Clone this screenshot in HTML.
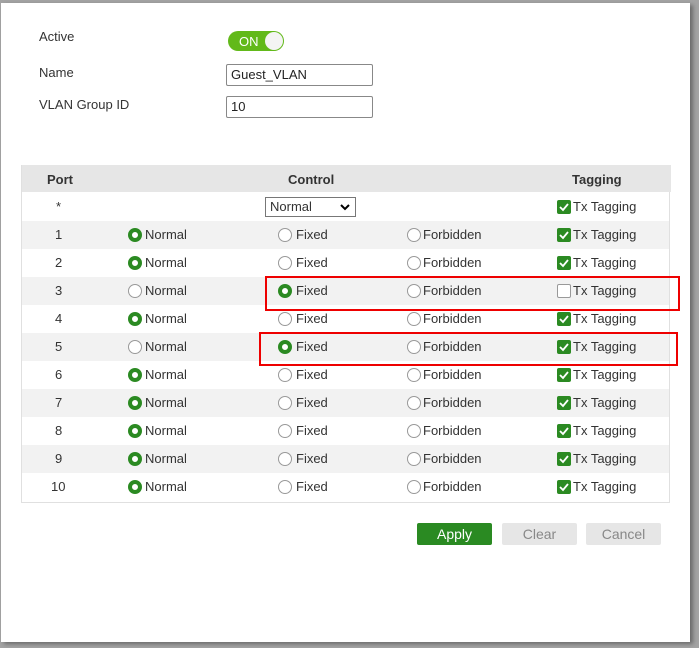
<!DOCTYPE html>
<html><head><style>
*{box-sizing:border-box;margin:0;padding:0}
body{width:699px;height:648px;background:#a3a3a3;position:relative;overflow:hidden;font-family:"Liberation Sans",sans-serif;font-size:13px;color:#333}
.dlg{position:absolute;left:1px;top:3px;width:689px;height:639px;background:#fff;box-shadow:3px 2px 4px rgba(0,0,0,.35)}
.a{position:absolute}
.lbl{font-size:13px;color:#333}
.inp{position:absolute;border:1px solid #888;border-radius:2px;height:22px;width:147px;padding-left:4px;line-height:20px;font-size:13px;color:#222}
.tbl{position:absolute;left:21px;top:165px;width:649px;height:338px;border:1px solid #e0e0e0;border-top:none}
.hdr{position:absolute;left:0;top:0;width:649px;height:27px;background:#e6e6e6;font-weight:bold;font-size:13px}
.row{position:absolute;left:0;width:647px;height:28px}
.row.alt{background:#f2f2f2}
.c{position:absolute;top:7px;line-height:14px}
.r{position:absolute;top:7px;width:14px;height:14px;border-radius:50%;border:1px solid #999;background:#fff}
.r.on{border:4px solid #2b8a22}
.cb{position:absolute;top:7px;width:14px;height:14px;border-radius:2px;background:#2b8a22}
.cb.off{background:#fff;border:1px solid #999}
.cb svg{position:absolute;left:2px;top:2px}
.btn{position:absolute;top:523px;height:22px;width:75px;text-align:center;line-height:22px;font-size:14px;border-radius:2px}
.red{position:absolute;border:2px solid #e00}
</style></head><body>
<div class="dlg"></div>
<div class="a lbl" style="left:39px;top:29px">Active</div>
<div class="a" style="left:228px;top:31px;width:56px;height:20px;border-radius:10px;background:#62b91a"><span class="a" style="left:11px;top:3px;color:#fff;font-size:13px">ON</span><span class="a" style="left:37px;top:1px;width:18px;height:18px;border-radius:50%;background:#f4f4f4"></span></div>
<div class="a lbl" style="left:39px;top:65px">Name</div>
<div class="inp" style="left:226px;top:64px">Guest_VLAN</div>
<div class="a lbl" style="left:39px;top:97px">VLAN Group ID</div>
<div class="inp" style="left:226px;top:96px">10</div>
<div class="tbl">
<div class="hdr"><span class="a" style="left:25px;top:7px">Port</span><span class="a" style="left:266px;top:7px">Control</span><span class="a" style="left:550px;top:7px">Tagging</span></div>
<div class="row" style="top:28px"><span class="c" style="left:34px">*</span>
<div class="a" style="left:243px;top:4px;width:91px;height:20px;border:1px solid #777;padding-left:4px;line-height:18px">Normal<svg class="a" style="right:5px;top:6px" width="10" height="7"><path d="M1 1l4 4 4-4" stroke="#000" stroke-width="2" fill="none"/></svg></div>
<span class="cb" style="left:535px"><svg width="10" height="10"><path d="M1 5l3 3 5-6" stroke="#fff" stroke-width="1.8" fill="none"/></svg></span><span class="c" style="left:551px">Tx Tagging</span></div>
<!--ROWS-->
</div>
<script>
var h='';for(var i=1;i<=10;i++){var fx=(i==3||i==5);var alt=i%2==1;
h+='<div class="row'+(alt?' alt':'')+'" style="top:'+(28+i*28)+'px"><span class="c" style="left:'+(i==10?29:33)+'px">'+i+'</span>'+
'<span class="r'+(fx?'':' on')+'" style="left:106px"></span><span class="c" style="left:123px">Normal</span>'+
'<span class="r'+(fx?' on':'')+'" style="left:256px"></span><span class="c" style="left:274px">Fixed</span>'+
'<span class="r" style="left:385px"></span><span class="c" style="left:401px">Forbidden</span>'+
'<span class="cb'+(i==3?' off':'')+'" style="left:535px">'+(i==3?'':'<svg width="10" height="10"><path d="M1 5l3 3 5-6" stroke="#fff" stroke-width="1.8" fill="none"/></svg>')+'</span><span class="c" style="left:551px">Tx Tagging</span></div>';}
document.querySelector('.tbl').insertAdjacentHTML('beforeend',h);
</script>
<div class="red" style="left:265px;top:276px;width:415px;height:35px"></div>
<div class="red" style="left:259px;top:332px;width:419px;height:34px"></div>
<div class="btn" style="left:417px;background:#2a8a22;color:#fff">Apply</div>
<div class="btn" style="left:502px;background:#e6e6e6;color:#888">Clear</div>
<div class="btn" style="left:586px;background:#e6e6e6;color:#888">Cancel</div>
</body></html>
